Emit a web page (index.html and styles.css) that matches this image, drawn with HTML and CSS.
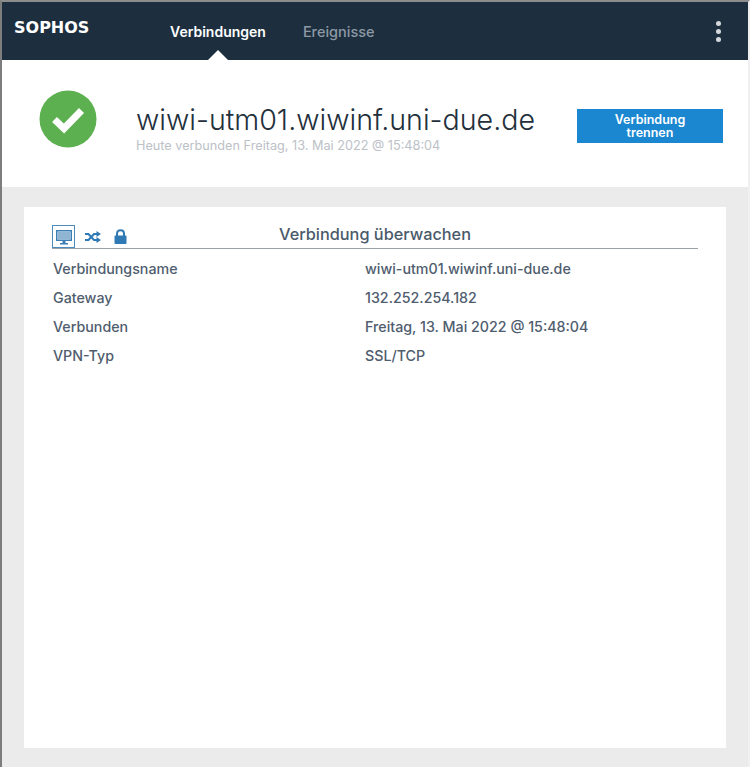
FILE: index.html
```html
<!DOCTYPE html>
<html lang="en">
<head>
    <meta charset="UTF-8">
    <title>Sophos Connect</title>
    <link rel="stylesheet" href="styles.css">
</head>
<body>
    <div class="window">
        <header class="topbar">
            <div class="logo">SOPHOS</div>
            <nav class="tabs">
                <a class="tab active">Verbindungen</a>
                <a class="tab">Ereignisse</a>
            </nav>
            <div class="menu-dots"><span></span><span></span><span></span></div>
        </header>

        <section class="status">
            <svg class="status-icon" width="58" height="58" viewBox="0 0 58 58">
                <circle cx="29" cy="29" r="28.5" fill="#5cb04f"/>
                <path d="M15.500 29.500 L25 38.500 L42.500 20.500" fill="none" stroke="#fff" stroke-width="7"/>
            </svg>
            <div class="status-text">
                <h1>wiwi-utm01.wiwinf.uni-due.de</h1>
                <p>Heute verbunden Freitag, 13. Mai 2022 @ 15:48:04</p>
            </div>
            <button class="disconnect">Verbindung trennen</button>
        </section>

        <main class="content">
            <div class="card">
                <div class="card-head">
                    <div class="icons">
                        <span class="icon-box">
                            <svg width="18" height="16" viewBox="0 0 18 16">
                                <path d="M1 1 H17 V12 H1 Z M2.500 2.500 V10.500 H15.500 V2.500 Z" fill="#3b7fb5" fill-rule="evenodd"/>
                                <rect x="2.500" y="2.500" width="13" height="8" fill="#8fb5d3"/>
                                <path d="M7.500 12 H10.500 V14 H13 V15.500 H5 V14 H7.500 Z" fill="#3b7fb5"/>
                            </svg>
                        </span>
                        <svg class="icon-shuffle" width="16" height="12" viewBox="0 0 16 12">
                            <path d="M0 3 H3.500 L9 9 H12" fill="none" stroke="#2f7ab5" stroke-width="2"/>
                            <path d="M0 9 H3.500 L9 3 H12" fill="none" stroke="#2f7ab5" stroke-width="2"/>
                            <path d="M11.500 0 L16 3 L11.500 6 Z M11.500 6 L16 9 L11.500 12 Z" fill="#2f7ab5"/>
                        </svg>
                        <svg class="icon-lock" width="13" height="15" viewBox="0 0 13 15">
                            <path d="M3 7 V4.500 C3 2.500 4.500 1.200 6.500 1.200 C8.500 1.200 10 2.500 10 4.500 V7" fill="none" stroke="#2f7ab5" stroke-width="2"/>
                            <rect x="0.500" y="6.500" width="12" height="8.500" rx="1" fill="#2f7ab5"/>
                        </svg>
                    </div>
                    <h2>Verbindung überwachen</h2>
                </div>
                <dl class="details">
                    <dt>Verbindungsname</dt><dd>wiwi-utm01.wiwinf.uni-due.de</dd>
                    <dt>Gateway</dt><dd>132.252.254.182</dd>
                    <dt>Verbunden</dt><dd>Freitag, 13. Mai 2022 @ 15:48:04</dd>
                    <dt>VPN-Typ</dt><dd>SSL/TCP</dd>
                </dl>
            </div>
        </main>
    </div>
</body>
</html>
```

FILE: styles.css
```css
html, body {
    margin: 0;
    padding: 0;
}

body {
    font-family: 'Inter', 'Liberation Sans', sans-serif;
    background: #ebebeb;
}

.window {
    height: 767px;
    box-sizing: border-box;
    display: flex;
    flex-direction: column;
    border-top: 2px solid #8c8c8c;
    border-left: 2px solid #7d7d7d;
    border-right: 2px solid #f0f0f0;
}

.topbar {
    height: 58px;
    flex: 0 0 auto;
    display: flex;
    align-items: center;
    background: #1d2f3f;
    padding: 0 27px 0 12px;
    color: #fff;
}

.logo {
    width: 156px;
    margin-top: -7px;
    font-family: 'DejaVu Sans', sans-serif;
    font-weight: 700;
    font-size: 16px;
}

.tabs {
    flex: 1;
    display: flex;
    align-items: center;
    gap: 37px;
}

.tab {
    position: relative;
    font-size: 14.500px;
    font-weight: 500;
    color: #8d99a5;
}

.tab.active {
    font-size: 14px;
    font-weight: 600;
    color: #fff;
}

.tab.active::after {
    content: "";
    position: absolute;
    left: 50%;
    bottom: -21px;
    margin-left: -11px;
    border-left: 11px solid transparent;
    border-right: 11px solid transparent;
    border-bottom: 11px solid #fff;
}

.menu-dots {
    display: flex;
    flex-direction: column;
    gap: 3px;
}

.menu-dots span {
    width: 5px;
    height: 5px;
    border-radius: 50%;
    background: #d5d9dd;
}

.status {
    height: 127px;
    flex: 0 0 auto;
    box-sizing: border-box;
    display: flex;
    align-items: center;
    background: #fff;
    padding: 0 25px 0 37px;
}

.status-icon {
    flex: 0 0 auto;
    margin: -10px 39px 0 0;
}

.status-text {
    flex: 1;
    margin-top: 11px;
}

.status-text h1 {
    margin: 0;
    font-size: 28.600px;
    line-height: 32px;
    font-weight: 300;
    color: #23303c;
    white-space: nowrap;
}

.status-text p {
    margin: 2px 0 0 0;
    font-size: 12.700px;
    line-height: 16px;
    color: #bcc1c7;
    white-space: nowrap;
}

.disconnect {
    width: 146px;
    height: 34px;
    margin-top: 4px;
    flex: 0 0 auto;
    border: none;
    padding: 0 30px;
    background: #1b87d0;
    color: #fff;
    font-family: inherit;
    font-size: 12.500px;
    line-height: 13px;
    font-weight: 600;
}

.content {
    flex: 1;
    display: flex;
    padding: 20px 22px 19px 22px;
    background: #ebebeb;
    min-height: 0;
}

.card {
    flex: 1;
    box-sizing: border-box;
    background: #fff;
    padding: 16px 28px 0 28px;
}

.card-head {
    position: relative;
    height: 25px;
    display: flex;
    align-items: flex-end;
    justify-content: center;
    border-bottom: 1px solid #9aa3ab;
}

.card-head h2 {
    margin: 0 0 4px 0;
    font-size: 16.300px;
    line-height: 20px;
    font-weight: 500;
    color: #4a5a6b;
}

.icons {
    position: absolute;
    left: 0;
    bottom: 0;
    display: flex;
    align-items: center;
}

.icon-box {
    width: 21px;
    height: 21px;
    display: flex;
    align-items: center;
    justify-content: center;
    border: 1px solid #4c8bbd;
}

.icon-shuffle {
    margin-left: 10px;
}

.icon-lock {
    margin-left: 13px;
}

.details {
    margin: 5px 0 0 1px;
    display: grid;
    grid-template-columns: 312px 1fr;
    grid-auto-rows: 29px;
    align-items: center;
    font-size: 14.250px;
    font-weight: 500;
    color: #4f5d6e;
}

.details dt, .details dd {
    margin: 0;
}
```
